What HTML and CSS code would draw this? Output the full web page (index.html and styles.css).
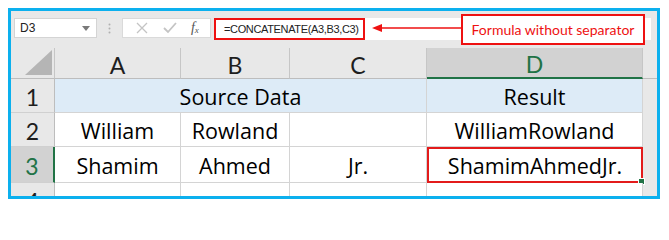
FILE: index.html
```html
<!DOCTYPE html>
<html>
<head>
<meta charset="utf-8">
<link rel="stylesheet" href="styles.css">
</head>
<body>
<div class="frame">
  <div class="fbar">
    <div class="namebox">
      <span class="ref">D3</span>
      <svg class="caret" width="8" height="5" viewBox="0 0 8 5"><polygon points="0,0 8,0 4,5" fill="#7a7a7a"/></svg>
    </div>
    <div class="dots">
      <svg width="3" height="11" viewBox="0 0 3 11"><circle cx="1.5" cy="1.5" r="1" fill="#b0b0b0"/><circle cx="1.5" cy="5.5" r="1" fill="#b0b0b0"/><circle cx="1.5" cy="9.5" r="1" fill="#b0b0b0"/></svg>
    </div>
    <div class="btns">
      <svg class="ico" width="12" height="12" viewBox="0 0 12 12"><path d="M1 1 L11 11 M11 1 L1 11" stroke="#c4c4c4" stroke-width="1.3" fill="none"/></svg>
      <svg class="ico" width="14" height="12" viewBox="0 0 14 12"><path d="M1 6 L5 10 L13 1" stroke="#c4c4c4" stroke-width="1.8" fill="none"/></svg>
      <span class="fx"><i>f</i><sub>x</sub></span>
    </div>
    <div class="finput">
      <div class="formula">=CONCATENATE(A3,B3,C3)</div>
    </div>
  </div>

  <svg class="arrow" width="92" height="10" viewBox="0 0 92 10"><polygon points="0,5 10,1 10,9" fill="#ee1111"/><line x1="9" y1="5" x2="92" y2="5" stroke="#ee1111" stroke-width="1.4"/></svg>
  <div class="callout">Formula without separator</div>

  <div class="grid">
    <div class="corner"><svg width="27" height="25" viewBox="0 0 27 25"><polygon points="0,25 27,25 27,0" fill="#b5b5b5"/></svg></div>
    <div class="ch">A</div>
    <div class="ch">B</div>
    <div class="ch">C</div>
    <div class="ch sel">D</div>
    <div class="ch rest"></div>

    <div class="rh">1</div>
    <div class="cell fill span3">Source Data</div>
    <div class="cell fill">Result</div>
    <div class="rest"></div>

    <div class="rh">2</div>
    <div class="cell">William</div>
    <div class="cell">Rowland</div>
    <div class="cell"></div>
    <div class="cell">WilliamRowland</div>
    <div class="rest"></div>

    <div class="rh rsel">3</div>
    <div class="cell">Shamim</div>
    <div class="cell">Ahmed</div>
    <div class="cell">Jr.</div>
    <div class="cell active">ShamimAhmedJr.<span class="handle"></span></div>
    <div class="rest"></div>

    <div class="rh">4</div>
    <div class="cell"></div>
    <div class="cell"></div>
    <div class="cell"></div>
    <div class="cell"></div>
    <div class="rest"></div>
  </div>
</div>
</body>
</html>
```

FILE: styles.css
```css
html, body {
  margin: 0;
  padding: 0;
  background: #ffffff;
}

.frame {
  position: relative;
  margin: 8px;
  width: 652px;
  height: 191px;
  box-sizing: border-box;
  border: 3px solid #0cb0ee;
  background: #e8e8e8;
  overflow: hidden;
  font-family: Lato, "Liberation Sans", sans-serif;
}

.fbar {
  display: flex;
  align-items: flex-start;
  height: 37px;
  box-sizing: border-box;
  padding: 7px 6px 0 3px;
}

.namebox {
  width: 83px;
  height: 20px;
  box-sizing: border-box;
  background: #fff;
  border: 1px solid #d4d4d4;
  display: flex;
  align-items: center;
  justify-content: space-between;
  padding: 0 6px 0 5px;
  font-family: "Liberation Sans", sans-serif;
  font-size: 12px;
  color: #222;
}

.dots {
  width: 25px;
  height: 20px;
  display: flex;
  align-items: center;
  justify-content: center;
}

.btns {
  width: 89px;
  height: 20px;
  box-sizing: border-box;
  background: #fff;
  border: 1px solid #dadada;
  display: flex;
  align-items: center;
  justify-content: space-around;
  padding: 0 4px 0 6px;
}

.fx {
  font-family: "Liberation Serif", serif;
  font-size: 14px;
  color: #555;
  line-height: 1;
}

.fx sub {
  font-size: 9px;
  font-style: italic;
  vertical-align: -1px;
}

.finput {
  flex: 1;
  height: 22px;
  margin-left: 3px;
  background: #fff;
  display: flex;
}

.formula {
  width: 151px;
  height: 22px;
  box-sizing: border-box;
  border: 2px solid #ee1111;
  padding: 0 0 0 8px;
  font-family: "Liberation Sans", sans-serif;
  font-size: 11px;
  letter-spacing: -0.35px;
  line-height: 18px;
  color: #222;
  white-space: nowrap;
}

.arrow {
  position: absolute;
  left: 361px;
  top: 12px;
}

.callout {
  position: absolute;
  left: 450px;
  top: 3px;
  width: 184px;
  height: 31px;
  box-sizing: border-box;
  border: 2px solid #ee1111;
  background: #fff;
  color: #ee1111;
  font-family: Lato, "Liberation Sans", sans-serif;
  font-size: 14px;
  line-height: 27px;
  text-align: center;
  white-space: nowrap;
}

.grid {
  display: grid;
  grid-template-columns: 44px 126px 109px 137px 216px 1fr;
  grid-template-rows: 31px 34px 34px 36px 34px;
}

.corner {
  display: flex;
  align-items: flex-end;
  justify-content: flex-end;
  padding: 0 2px 3px 0;
  border-right: 1px solid #c6c6c6;
  border-bottom: 1px solid #bdbdbd;
}

.ch {
  display: flex;
  align-items: center;
  justify-content: center;
  font-size: 23px;
  color: #1e1e1e;
  border-right: 1px solid #c6c6c6;
  border-bottom: 1px solid #bdbdbd;
  box-sizing: border-box;
  padding-top: 3px;
}

.ch.sel {
  background: #d2d2d2;
  color: #217346;
  border-bottom: 2px solid #217346;
}

.ch.rest {
  border-right: none;
}

.rh {
  display: flex;
  align-items: center;
  justify-content: center;
  font-size: 23px;
  color: #1e1e1e;
  border-right: 1px solid #bdbdbd;
  border-bottom: 1px solid #d0d0d0;
  box-sizing: border-box;
  padding-top: 2px;
}

.rh.rsel {
  background: #d2d2d2;
  color: #217346;
  border-right: 2px solid #217346;
}

.cell {
  position: relative;
  background: #fff;
  display: flex;
  align-items: center;
  justify-content: center;
  font-family: "Open Sans", Lato, sans-serif;
  font-size: 21.5px;
  color: #000;
  border-right: 1px solid #d4d4d4;
  border-bottom: 1px solid #d4d4d4;
  box-sizing: border-box;
  padding-top: 1px;
  white-space: nowrap;
}

.cell.fill {
  background: #ddebf7;
}

.cell.span3 {
  grid-column: span 3;
}

.cell.active {
  border: 2px solid #e31b1b;
}

.handle {
  position: absolute;
  right: -4px;
  bottom: -4px;
  width: 5px;
  height: 5px;
  background: #217346;
  border: 1px solid #fff;
}

.rest {
  background: #e8e8e8;
}
```
